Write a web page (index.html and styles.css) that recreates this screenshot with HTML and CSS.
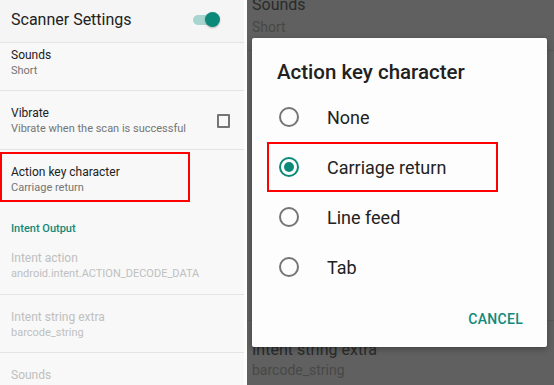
FILE: index.html
```html
<!DOCTYPE html>
<html lang="en">
<head>
  <meta charset="UTF-8" />
  <meta name="viewport" content="width=device-width, initial-scale=1.0">
  <title>Scanner Settings</title>
  <link rel="stylesheet" href="styles.css">
</head>
<body>
  <div class="settings">
    <div class="toolbar">
      <span class="toolbar-title">Scanner Settings</span>
      <span class="switch"></span>
    </div>

    <div class="pref pref-sounds">
      <div class="pref-title">Sounds</div>
      <div class="pref-summary">Short</div>
    </div>

    <div class="pref pref-vibrate">
      <div class="pref-text">
        <div class="pref-title">Vibrate</div>
        <div class="pref-summary">Vibrate when the scan is successful</div>
      </div>
      <span class="checkbox"></span>
    </div>

    <div class="pref pref-action">
      <div class="marked">
        <div class="pref-title">Action key character</div>
        <div class="pref-summary">Carriage return</div>
      </div>
    </div>

    <div class="category">Intent Output</div>

    <div class="pref pref-disabled pref-intent">
      <div class="pref-title">Intent action</div>
      <div class="pref-summary">android.intent.ACTION_DECODE_DATA</div>
    </div>

    <div class="pref pref-disabled pref-extra">
      <div class="pref-title">Intent string extra</div>
      <div class="pref-summary">barcode_string</div>
    </div>

    <div class="pref pref-disabled pref-last">
      <div class="pref-title">Sounds</div>
    </div>
  </div>

  <div class="dimmed">
    <div class="dim-item dim-top">
      <div class="dim-title">Sounds</div>
      <div class="dim-summary">Short</div>
    </div>
    <div class="dim-gap"></div>
    <div class="dim-item dim-bottom">
      <div class="dim-title">Intent string extra</div>
      <div class="dim-summary">barcode_string</div>
    </div>

    <div class="dialog">
      <div class="dialog-title">Action key character</div>
      <div class="choices">
        <div class="choice"><span class="radio"></span><span class="choice-label">None</span></div>
        <div class="choice choice-marked"><span class="radio radio-on"></span><span class="choice-label">Carriage return</span></div>
        <div class="choice"><span class="radio"></span><span class="choice-label">Line feed</span></div>
        <div class="choice"><span class="radio"></span><span class="choice-label">Tab</span></div>
      </div>
      <div class="dialog-actions">
        <span class="text-btn">CANCEL</span>
      </div>
    </div>
  </div>
</body>
</html>
```

FILE: styles.css
```css
* {
  box-sizing: border-box;
}

body {
  margin: 0;
  width: 554px;
  height: 385px;
  overflow: hidden;
  display: flex;
  background: #fdfdfd;
  font-family: Roboto, 'Liberation Sans', sans-serif;
}

/* left: the settings screen */

.settings {
  width: 244px;
  height: 385px;
  overflow: hidden;
  background: #f7f8f7;
}

.toolbar {
  height: 43px;
  padding-left: 11px;
  padding-right: 24px;
  display: flex;
  align-items: center;
  justify-content: space-between;
  background: #f5f5f5;
  border-bottom: 1px solid #e3e4e3;
}

.toolbar-title {
  font-size: 16px;
  color: #212121;
  margin-top: -3px;
}

.switch {
  position: relative;
  width: 27px;
  height: 15px;
  margin-top: -3px;
}

.switch::before {
  content: "";
  position: absolute;
  left: 0;
  top: 2.5px;
  width: 22px;
  height: 10px;
  border-radius: 5px;
  background: #a6d6cf;
}

.switch::after {
  content: "";
  position: absolute;
  right: 0;
  top: 0;
  width: 15px;
  height: 15px;
  border-radius: 50%;
  background: #0b8a7a;
  box-shadow: 0 1px 2px rgba(0, 0, 0, 0.25);
}

.pref {
  padding-left: 11px;
  border-bottom: 1px solid #e3e4e3;
}

.pref-title {
  font-size: 12px;
  line-height: 16px;
  color: #212121;
}

.pref-summary {
  font-size: 11px;
  line-height: 16px;
  color: #757575;
}

.pref-sounds {
  padding-top: 4px;
  padding-bottom: 11px;
}

.pref-vibrate {
  padding-top: 14px;
  padding-bottom: 12px;
  padding-right: 14px;
  display: flex;
  align-items: center;
  justify-content: space-between;
}

.checkbox {
  width: 13px;
  height: 14px;
  border: 2px solid #757575;
  border-radius: 1px;
}

.pref-action {
  padding-left: 0;
  padding-top: 2px;
  border-bottom: none;
}

.marked {
  width: 190px;
  padding: 10px 0 4px 9px;
  border: 2px solid #ff0000;
}

.category {
  margin-top: 19px;
  padding-left: 11px;
  font-size: 11px;
  line-height: 16px;
  font-weight: 500;
  color: #0f8a7b;
}

.pref-disabled .pref-title,
.pref-disabled .pref-summary {
  color: #bfc0bf;
}

.pref-intent {
  padding-top: 13px;
  padding-bottom: 12px;
}

.pref-extra {
  padding-top: 14px;
  padding-bottom: 11px;
}

.pref-last {
  padding-top: 14px;
  border-bottom: none;
}

/* right: same screen, dimmed behind the dialog */

.dimmed {
  position: relative;
  flex: 1;
  margin-left: 3px;
  height: 385px;
  overflow: hidden;
  background: #5f605f;
}

.dim-item {
  padding-left: 5px;
}

.dim-title {
  font-size: 16px;
  line-height: 22px;
  color: #2a2b2a;
}

.dim-summary {
  font-size: 14px;
  line-height: 22px;
  color: #474847;
}

.dim-top {
  margin-top: -6px;
  padding-bottom: 12px;
  border-bottom: 1px solid #575857;
}

.dim-gap {
  height: 270px;
  border-bottom: 1px solid #575857;
}

.dim-bottom {
  padding-top: 18px;
}

.dim-bottom .dim-summary {
  line-height: 18px;
}

.dialog {
  position: absolute;
  left: 5px;
  top: 38px;
  width: 295px;
  height: 309px;
  background: #fcfdfc;
  border-radius: 2px;
  box-shadow: 0 2px 6px rgba(0, 0, 0, 0.3);
}

.dialog-title {
  padding: 22px 0 0 25px;
  font-size: 20.5px;
  line-height: 24px;
  font-weight: 500;
  color: #212121;
}

.choices {
  margin-top: 8px;
  padding-left: 15px;
}

.choice {
  width: 231px;
  height: 50px;
  padding-left: 10px;
  display: flex;
  align-items: center;
  border: 2px solid transparent;
}

.choice-marked {
  border-color: #ff0000;
}

.radio {
  width: 20px;
  height: 20px;
  border: 2px solid #757575;
  border-radius: 50%;
  display: flex;
  align-items: center;
  justify-content: center;
}

.radio-on {
  border-color: #0b8a7a;
}

.radio-on::after {
  content: "";
  width: 10px;
  height: 10px;
  border-radius: 50%;
  background: #0b8a7a;
}

.choice-label {
  margin-left: 28px;
  font-size: 18px;
  color: #222;
}

.dialog-actions {
  margin-top: 17px;
  padding-right: 24px;
  display: flex;
  justify-content: flex-end;
}

.text-btn {
  font-size: 14px;
  line-height: 20px;
  font-weight: 500;
  letter-spacing: 0.3px;
  color: #0f8a7b;
}
```
